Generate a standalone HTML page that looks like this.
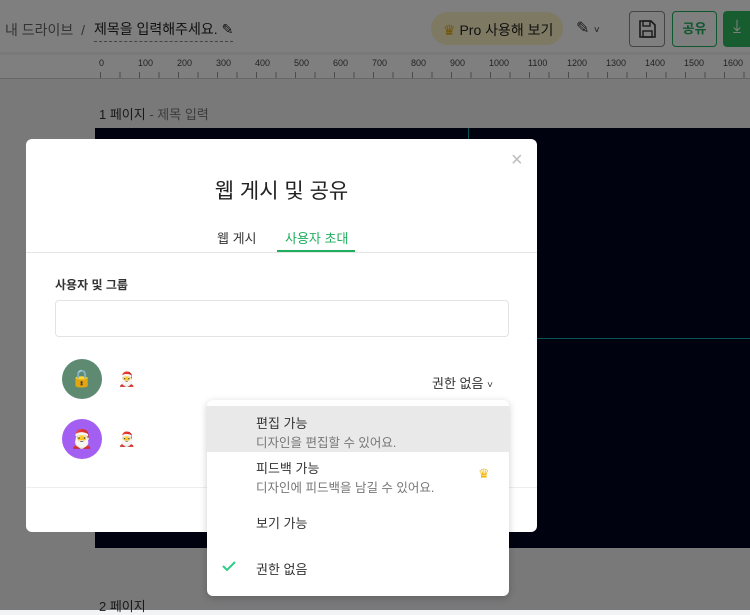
<!DOCTYPE html>
<html><head><meta charset="utf-8"><style>
*{box-sizing:border-box;margin:0;padding:0}
body{width:750px;height:610px;overflow:hidden;position:relative;background:#f2f3f5;font-family:"Liberation Sans","Noto Sans CJK KR",sans-serif;color:#333}
.abs{position:absolute}
.ov{position:absolute;left:0;top:0;width:750px;height:610px;background:rgba(0,0,0,0.5)}
</style></head><body>
<div class="abs" style="left:0;top:0;width:750px;height:52px;background:#fff"></div>
<div class="abs" style="left:5px;top:20px;font-size:14px;color:#666">내 드라이브 &nbsp;/</div>
<div class="abs" style="left:94px;top:19px;font-size:14px;color:#222;border-bottom:1px dashed #888;padding-bottom:2px">제목을 입력해주세요. ✎</div>
<div class="abs" style="left:431px;top:12px;width:132px;height:33px;border-radius:17px;background:#fdf3c4;font-size:14px;color:#222;padding:8px 0 0 12px"><span style="color:#e0a800">♛</span> Pro 사용해 보기</div>
<div class="abs" style="left:576px;top:18px;font-size:16px;color:#333">✎ <span style="font-size:10px">˅</span></div>
<div class="abs" style="left:629px;top:11px;width:36px;height:36px;border:1px solid #888;border-radius:4px;background:#fff">
<svg width="34" height="34" viewBox="0 0 34 34"><path d="M10 9h11l4 4v12H10z" fill="none" stroke="#333" stroke-width="1.6"/><rect x="13" y="9" width="7" height="5" fill="none" stroke="#333" stroke-width="1.4"/><rect x="13" y="19" width="9" height="6" fill="none" stroke="#333" stroke-width="1.4"/></svg></div>
<div class="abs" style="left:672px;top:11px;width:45px;height:36px;border:1.5px solid #1fae5e;border-radius:4px;background:#fff;color:#1fae5e;font-size:13px;font-weight:bold;text-align:center;line-height:33px">공유</div>
<div class="abs" style="left:723px;top:11px;width:40px;height:36px;background:#2fba5f;border-radius:4px;color:#fff;font-size:18px;padding:5px 0 0 10px">⤓</div>
<div class="abs" style="left:0;top:55px;width:750px;height:24px;background:#fff;border-bottom:1px solid #ccc;background-image:repeating-linear-gradient(90deg,#999 0 1px,transparent 1px 19.5px);background-size:100% 6px;background-repeat:no-repeat;background-position:100px 17px"></div>
<div class="abs" style="left:99px;top:58px;font-size:9px;color:#444;white-space:nowrap">
<span style="display:inline-block;width:39px">0</span><span style="display:inline-block;width:39px">100</span><span style="display:inline-block;width:39px">200</span><span style="display:inline-block;width:39px">300</span><span style="display:inline-block;width:39px">400</span><span style="display:inline-block;width:39px">500</span><span style="display:inline-block;width:39px">600</span><span style="display:inline-block;width:39px">700</span><span style="display:inline-block;width:39px">800</span><span style="display:inline-block;width:39px">900</span><span style="display:inline-block;width:39px">1000</span><span style="display:inline-block;width:39px">1100</span><span style="display:inline-block;width:39px">1200</span><span style="display:inline-block;width:39px">1300</span><span style="display:inline-block;width:39px">1400</span><span style="display:inline-block;width:39px">1500</span><span style="display:inline-block;width:39px">1600</span></div>
<div class="abs" style="left:99px;top:104px;font-size:13px;color:#333">1 페이지 <span style="color:#777">- 제목 입력</span></div>
<div class="abs" style="left:95px;top:128px;width:655px;height:420px;background:#00061f"></div>
<div class="abs" style="left:468px;top:128px;width:1px;height:420px;background:#1aa"></div>
<div class="abs" style="left:468px;top:338px;width:282px;height:1px;background:#1aa"></div>
<div class="abs" style="left:99px;top:596px;font-size:13px;color:#333">2 페이지</div>
<div class="ov"></div>

<div class="abs" style="left:26px;top:139px;width:511px;height:393px;background:#fff;border-radius:6px">
<div class="abs" style="left:485px;top:10px;font-size:20px;color:#bbb">×</div>
<div class="abs" style="left:0;width:511px;top:36px;text-align:center;font-size:21px;color:#222">웹 게시 및 공유</div>
<div class="abs" style="left:191px;top:89px;font-size:13px;color:#333">웹 게시</div>
<div class="abs" style="left:259px;top:89px;font-size:13px;color:#1fae5e">사용자 초대</div>
<div class="abs" style="left:251px;top:111px;width:78px;height:2px;background:#1fae5e"></div>
<div class="abs" style="left:0;top:113px;width:511px;height:1px;background:#e5e5e5"></div>
<div class="abs" style="left:29px;top:137px;font-size:12px;font-weight:bold;color:#333">사용자 및 그룹</div>
<div class="abs" style="left:29px;top:161px;width:454px;height:37px;border:1px solid #e3e3e3;border-radius:4px"></div>
<div class="abs" style="left:36px;top:220px;width:40px;height:40px;border-radius:50%;background:#5e8a72;text-align:center;line-height:40px;font-size:17px">🔒</div>
<div class="abs" style="left:92px;top:232px;font-size:14px">🎅</div>
<div class="abs" style="left:36px;top:280px;width:40px;height:40px;border-radius:50%;background:#a35ef2;text-align:center;line-height:40px;font-size:18px">🎅</div>
<div class="abs" style="left:92px;top:292px;font-size:14px">🎅</div>
<div class="abs" style="left:406px;top:234px;font-size:13px;color:#333">권한 없음 <span style="font-size:10px">˅</span></div>
<div class="abs" style="left:0;top:348px;width:511px;height:1px;background:#eee"></div>
</div>

<div class="abs" style="left:207px;top:400px;width:302px;height:196px;background:#fff;border-radius:6px;box-shadow:0 2px 8px rgba(0,0,0,.2)">
<div class="abs" style="left:0;top:6px;width:302px;height:46px;background:#e9e9e9"></div>
<div class="abs" style="left:49px;top:13px;font-size:13px;color:#333">편집 가능</div>
<div class="abs" style="left:49px;top:32px;font-size:12.5px;color:#777">디자인을 편집할 수 있어요.</div>
<div class="abs" style="left:49px;top:58px;font-size:13px;color:#333">피드백 가능</div>
<div class="abs" style="left:49px;top:77px;font-size:12.5px;color:#777">디자인에 피드백을 남길 수 있어요.</div>
<div class="abs" style="left:271px;top:66px;font-size:13px;color:#f2b705">♛</div>
<div class="abs" style="left:49px;top:113px;font-size:13px;color:#333">보기 가능</div>
<svg class="abs" style="left:14px;top:160px" width="16" height="12" viewBox="0 0 16 12"><path d="M2 6l4 4 8-8" fill="none" stroke="#2ecc8a" stroke-width="2"/></svg>
<div class="abs" style="left:49px;top:159px;font-size:13px;color:#333">권한 없음</div>
</div>
</body></html>
